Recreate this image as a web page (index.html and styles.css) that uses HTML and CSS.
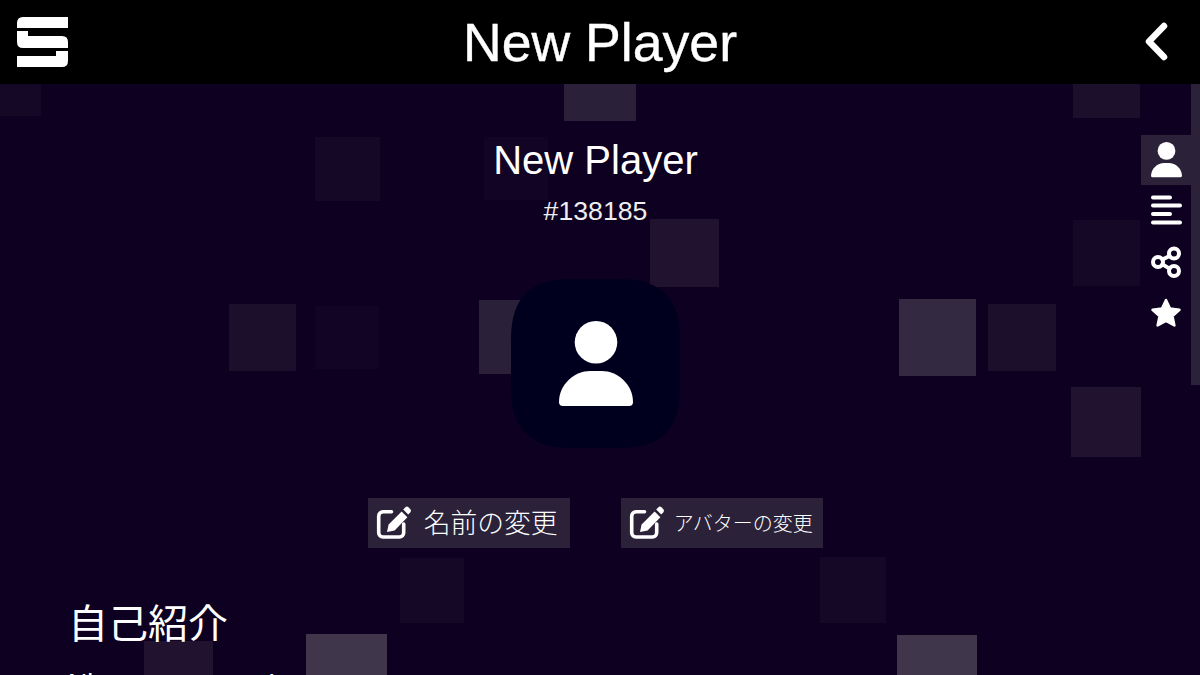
FILE: index.html
```html
<!DOCTYPE html>
<html lang="ja">
<head>
    <meta charset="UTF-8">
    <meta name="viewport" content="width=device-width, initial-scale=1.0">
    <title>New Player</title>
    <link rel="stylesheet" href="styles.css">
</head>
<body>
    <svg width="0" height="0" class="defs">
        <symbol id="icon-user" viewBox="0 0 74 85">
            <circle cx="37" cy="21.3" r="21.3"></circle>
            <path d="M4 85H70Q74 85 74 81C74 63 58 50 43 50H31C16 50 0 63 0 81Q0 85 4 85Z"></path>
        </symbol>
        <symbol id="icon-edit" viewBox="0 0 36 36">
            <path class="edit-box" d="M16.5 6.7H8A4.4 4.4 0 0 0 3.7 11V27.6A4.4 4.4 0 0 0 8 32H24.4A4.4 4.4 0 0 0 28.7 27.6V19"></path>
            <path d="M12 27L13.6 19.4L26.6 6.4L32.4 12.2L19.6 25.4Z"></path>
            <path d="M28.2 4.6L30.2 2.4Q31.8 .8 33.4 2.2L35.4 4.2Q36.6 5.8 35.2 7.4L33.2 9.6Z"></path>
        </symbol>
    </svg>

    <div id="container">
        <header class="topbar">
            <svg class="logo" viewBox="0 0 51 50">
                <path d="M6 0H51V11H0V6Q0 0 6 0Z"></path>
                <path d="M0 14H11V19H45Q51 19 51 25V31H6Q0 31 0 25Z"></path>
                <path d="M0 39H39V34H51V44Q51 50 45 50H0Z"></path>
            </svg>
            <h1 class="topbar-title">New Player</h1>
            <svg class="back" viewBox="0 0 26 40">
                <path d="M21 4L6 19.5L21 35"></path>
            </svg>
        </header>

        <main class="content">
            <svg class="backdrop" viewBox="0 0 1200 591">
                <rect class="s1" x="0" y="0" width="41" height="32"></rect>
                <rect class="s4" x="564" y="0" width="72" height="37"></rect>
                <rect class="s1" x="315" y="53" width="65" height="64"></rect>
                <rect class="s0" x="484" y="53" width="64" height="63"></rect>
                <rect class="s3" x="650" y="135" width="69" height="68"></rect>
                <rect class="s2" x="229" y="220" width="67" height="67"></rect>
                <rect class="s0" x="315" y="222" width="64" height="63"></rect>
                <rect class="s4" x="479" y="216" width="75" height="74"></rect>
                <rect class="s5" x="899" y="215" width="77" height="77"></rect>
                <rect class="s2" x="988" y="220" width="68" height="67"></rect>
                <rect class="s2" x="1073" y="0" width="67" height="34"></rect>
                <rect class="s1" x="1073" y="136" width="67" height="66"></rect>
                <rect class="s3" x="1071" y="303" width="70" height="70"></rect>
                <rect class="s1" x="400" y="474" width="64" height="65"></rect>
                <rect class="s1" x="820" y="473" width="66" height="66"></rect>
                <rect class="s6" x="897" y="551" width="80" height="40"></rect>
                <rect class="s6" x="306" y="550" width="81" height="41"></rect>
                <rect class="s3" x="144" y="557" width="69" height="34"></rect>
            </svg>

            <section class="profile">
                <h2 class="player-name">New Player</h2>
                <p class="player-id">#138185</p>
                <div class="avatar">
                    <svg class="avatar-icon"><use href="#icon-user"></use></svg>
                </div>
                <div class="actions">
                    <button class="button">
                        <svg class="edit-icon"><use href="#icon-edit"></use></svg>
                        <span class="button-label">名前の変更</span>
                    </button>
                    <button class="button">
                        <svg class="edit-icon"><use href="#icon-edit"></use></svg>
                        <span class="button-label small">アバターの変更</span>
                    </button>
                </div>
            </section>

            <section class="intro">
                <h2 class="intro-title">自己紹介</h2>
                <p class="intro-text">Nice to meet you!</p>
            </section>

            <nav class="sidenav">
                <a class="sidenav-item active">
                    <svg class="user-icon"><use href="#icon-user"></use></svg>
                </a>
                <a class="sidenav-item">
                    <svg class="nav-icon" viewBox="0 0 32 32">
                        <path d="M3 2.5H20M3 10.5H30M3 19H20M3 27.5H30"></path>
                    </svg>
                </a>
                <a class="sidenav-item">
                    <svg class="nav-icon" viewBox="0 0 32 32">
                        <circle cx="24" cy="7.5" r="5"></circle>
                        <circle cx="8" cy="16" r="5"></circle>
                        <circle cx="24" cy="25" r="5"></circle>
                        <path d="M12.5 13.6L19.5 9.9M12.5 18.4L19.5 22.6"></path>
                    </svg>
                </a>
                <a class="sidenav-item">
                    <svg class="star-icon" viewBox="0 0 32 32">
                        <path d="M16 3L20 11.6L29.5 12.8L22.5 19.2L24.4 28.5L16 23.8L7.6 28.5L9.5 19.2L2.5 12.8L12 11.6Z"></path>
                    </svg>
                </a>
            </nav>

            <div class="scrollbar"></div>
        </main>
    </div>
</body>
</html>
```

FILE: styles.css
```css
body {
    font-family: "Liberation Sans", "Noto Sans CJK JP", sans-serif;
    margin: 0;
    padding: 0;
    background: #0d0020;
    color: #ffffff;
    overflow: hidden;
}
h1, h2, p {
    margin: 0;
    font-weight: normal;
}
.defs {
    display: block;
    height: 0;
}
#container {
    display: flex;
    flex-direction: column;
    height: 675px;
    overflow: hidden;
}
.topbar {
    display: grid;
    grid-template-columns: 1fr auto 1fr;
    align-items: center;
    flex: 0 0 84px;
    background: #000000;
    padding: 0 17px;
}
.topbar-title {
    font-size: 53.6px;
    line-height: 82px;
    -webkit-text-stroke: 0.4px #ffffff;
}
.logo {
    width: 51px;
    height: 50px;
    fill: #ffffff;
}
.back {
    justify-self: end;
    width: 26px;
    height: 40px;
    margin-right: 14px;
    fill: none;
    stroke: #ffffff;
    stroke-width: 6.5;
    stroke-linecap: round;
    stroke-linejoin: round;
}
.content {
    position: relative;
    flex: 1;
    padding-right: 9px;
    overflow: hidden;
}
.backdrop {
    position: absolute;
    top: 0;
    left: 0;
    width: 1200px;
    height: 591px;
}
.s0 { fill: #110424; }
.s1 { fill: #150827; }
.s2 { fill: #1c0f2c; }
.s3 { fill: #211330; }
.s4 { fill: #2b2039; }
.s5 { fill: #332941; }
.s6 { fill: #40364b; }
.profile {
    position: relative;
    display: flex;
    flex-direction: column;
    align-items: center;
    padding-top: 53px;
}
.player-name {
    font-size: 40px;
    line-height: 46px;
}
.player-id {
    font-size: 26.67px;
    line-height: 31px;
    margin-top: 13px;
    color: #eeeeee;
}
.avatar {
    display: flex;
    justify-content: center;
    align-items: center;
    width: 169px;
    height: 169px;
    margin-top: 52px;
    background: #00001e;
    clip-path: path("M60 0H109C150 0 169 19 169 60V109C169 150 150 169 109 169H60C19 169 0 150 0 109V60C0 19 19 0 60 0Z");
}
.avatar-icon {
    width: 74px;
    height: 85px;
    fill: #ffffff;
}
.actions {
    display: flex;
    gap: 50.33px;
    margin-top: 50px;
}
.button {
    display: flex;
    align-items: center;
    gap: 13px;
    width: 202.67px;
    height: 50px;
    padding: 0 0 0 7px;
    border: none;
    background: #2b2138;
    color: #ffffff;
    font-family: inherit;
}
.edit-icon {
    flex: none;
    width: 36px;
    height: 36px;
    fill: #ffffff;
}
.edit-box {
    fill: none;
    stroke: #ffffff;
    stroke-width: 3.6;
    stroke-linecap: round;
}
.button-label {
    font-size: 26.8px;
    font-family: "Noto Sans CJK JP", sans-serif;
    font-weight: 300;
    padding-bottom: 4px;
}
.button-label.small {
    font-size: 20px;
    margin-left: -3px;
    padding-bottom: 2px;
}
.intro {
    position: relative;
    padding: 44px 0 0 68px;
}
.intro-title {
    font-family: "Noto Sans CJK JP", sans-serif;
    font-size: 40px;
    line-height: 58px;
}
.intro-text {
    font-size: 26.67px;
    line-height: 31px;
    margin-top: 18px;
}
.sidenav {
    position: absolute;
    top: 51px;
    right: 9px;
    display: flex;
    flex-direction: column;
    gap: 1px;
}
.sidenav-item {
    display: flex;
    justify-content: center;
    align-items: center;
    width: 50px;
    height: 50px;
}
.sidenav-item.active {
    background: #2b2138;
}
.user-icon {
    width: 31px;
    height: 35.5px;
    fill: #ffffff;
}
.nav-icon {
    width: 32px;
    height: 32px;
    fill: none;
    stroke: #ffffff;
    stroke-width: 4;
    stroke-linecap: round;
}
.star-icon {
    width: 32px;
    height: 32px;
    fill: #ffffff;
    stroke: #ffffff;
    stroke-width: 2.5;
    stroke-linejoin: round;
}
.scrollbar {
    position: absolute;
    top: 0;
    right: 0;
    width: 9px;
    height: 301px;
    background: #2b2138;
}
```
